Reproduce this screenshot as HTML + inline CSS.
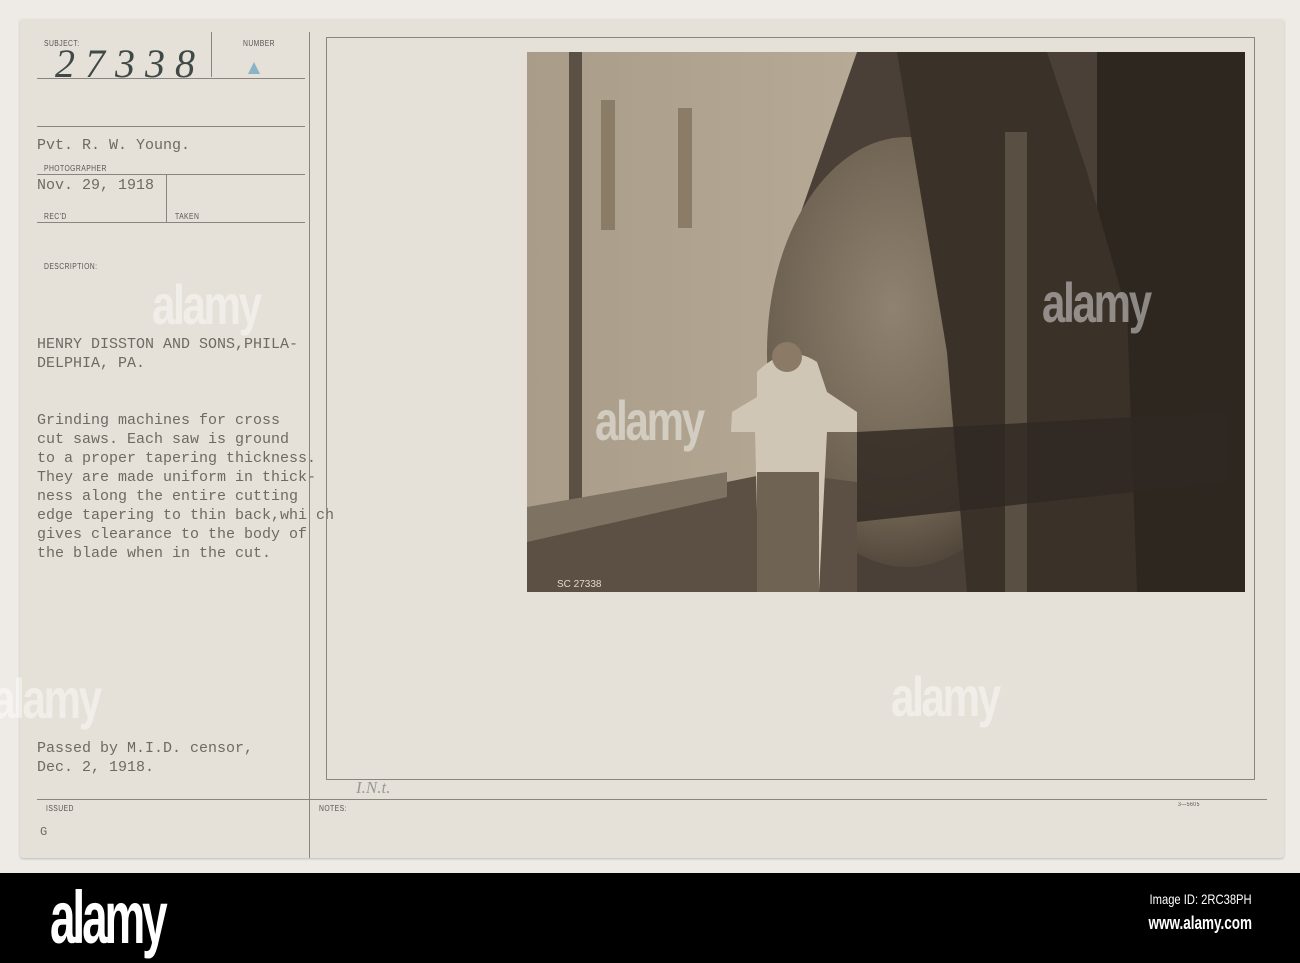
<!DOCTYPE html>
<html><head><meta charset="utf-8"><style>
*{margin:0;padding:0;box-sizing:border-box}
body{width:1300px;height:963px;background:#eeebe6;position:relative;overflow:hidden;font-family:"Liberation Sans",sans-serif}
#card{position:absolute;left:20px;top:19px;width:1264px;height:839px;background:#e6e1d8;border-radius:3px;box-shadow:0 1px 2px #bbb}
.t{position:absolute;font-family:"Liberation Mono",monospace;font-size:15px;color:#6e6962;line-height:19px;white-space:pre;letter-spacing:0}
.l{position:absolute;font-size:8px;color:#555;letter-spacing:.5px;font-family:"Liberation Sans",sans-serif;transform:scaleX(.85);transform-origin:left}
.h{position:absolute;height:1px;background:#8a857e}
.v{position:absolute;width:1px;background:#8a857e}
.wm{position:absolute;color:rgba(255,255,255,.45);font-family:"Liberation Sans",sans-serif;font-weight:bold;font-size:56px;letter-spacing:-3px;transform:scaleX(.75);transform-origin:left}
#bar{position:absolute;left:0;top:873px;width:1300px;height:90px;background:#000}
</style></head><body>
<div id="card"></div>
<div class="l" style="left:44px;top:39px">SUBJECT:</div>
<div class="l" style="left:243px;top:39px">NUMBER</div>
<div style="position:absolute;left:55px;top:40px;font-family:'Liberation Serif',serif;font-style:italic;font-size:40px;color:#3f4a48;letter-spacing:10px">27338</div>
<div style="position:absolute;left:248px;top:62px;width:0;height:0;border-left:6px solid transparent;border-right:6px solid transparent;border-bottom:12px solid #8ab3c6"></div>
<div class="v" style="left:211px;top:32px;height:45px"></div>
<div class="h" style="left:37px;top:78px;width:268px"></div>
<div class="h" style="left:37px;top:126px;width:268px"></div>
<div class="t" style="left:37px;top:136px">Pvt. R. W. Young.</div>
<div class="l" style="left:44px;top:164px">PHOTOGRAPHER</div>
<div class="h" style="left:37px;top:174px;width:268px"></div>
<div class="t" style="left:37px;top:176px">Nov. 29, 1918</div>
<div class="v" style="left:166px;top:175px;height:47px"></div>
<div class="l" style="left:44px;top:212px">REC'D</div>
<div class="l" style="left:175px;top:212px">TAKEN</div>
<div class="h" style="left:37px;top:222px;width:268px"></div>
<div class="l" style="left:44px;top:262px">DESCRIPTION:</div>
<div class="t" style="left:37px;top:335px">HENRY DISSTON AND SONS,PHILA-
DELPHIA, PA.</div>
<div class="t" style="left:37px;top:411px">Grinding machines for cross
cut saws. Each saw is ground
to a proper tapering thickness.
They are made uniform in thick-
ness along the entire cutting
edge tapering to thin back,whi ch
gives clearance to the body of
the blade when in the cut.</div>
<div class="t" style="left:37px;top:739px">Passed by M.I.D. censor,
Dec. 2, 1918.</div>
<div class="v" style="left:309px;top:32px;height:826px"></div>
<div style="position:absolute;left:326px;top:37px;width:929px;height:743px;border:1px solid #8a857e"></div>
<div class="h" style="left:37px;top:799px;width:1230px"></div>
<div class="l" style="left:46px;top:804px">ISSUED</div>
<div class="l" style="left:319px;top:804px">NOTES:</div>
<div class="l" style="left:1178px;top:802px;font-size:6px">3—5605</div>
<div class="t" style="left:40px;top:823px;font-size:12px">G</div>
<div style="position:absolute;left:356px;top:778px;font-family:'Liberation Serif',serif;font-style:italic;font-size:17px;color:#999">I.N.t.</div>
<svg style="position:absolute;left:527px;top:52px" width="718" height="540" viewBox="0 0 718 540">
<defs>
<linearGradient id="wall" x1="0" x2="1"><stop offset="0" stop-color="#a99d89"/><stop offset=".5" stop-color="#b7ab97"/><stop offset="1" stop-color="#8a7d6a"/></linearGradient>
<radialGradient id="wh" cx=".45" cy=".4" r=".7"><stop offset="0" stop-color="#8f8270"/><stop offset=".7" stop-color="#6a5e4e"/><stop offset="1" stop-color="#3e352b"/></radialGradient>
</defs>
<rect width="718" height="540" fill="url(#wall)"/>
<rect x="42" y="0" width="13" height="480" fill="#5a5044"/>
<rect x="74" y="48" width="14" height="130" fill="#8a7c66"/>
<rect x="151" y="56" width="14" height="120" fill="#8a7c66"/>
<path d="M330 0 L718 0 L718 540 L240 540 L260 200Z" fill="#4a4037"/>
<rect x="570" y="0" width="148" height="540" fill="#2e2720"/>
<ellipse cx="380" cy="300" rx="140" ry="215" fill="url(#wh)"/>
<path d="M370 0 L520 0 L560 120 L600 260 L610 540 L440 540 L420 300 L380 60Z" fill="#3a3129"/>
<rect x="478" y="80" width="22" height="460" fill="#5a4f43"/>
<path d="M0 470 L250 420 L330 430 L330 540 L0 540Z" fill="#5b5043"/>
<path d="M0 455 L200 420 L200 445 L0 490Z" fill="#7e7262"/>
<path d="M230 320 Q260 290 290 310 L300 340 L330 360 L330 380 L300 380 L292 540 L232 540 L228 380 L204 380 L205 360 L230 345Z" fill="#d0c6b6"/>
<rect x="230" y="420" width="62" height="120" fill="#6f6454"/>
<circle cx="260" cy="305" r="15" fill="#8a7a66"/>
<path d="M330 380 L700 360 L700 430 L330 470Z" fill="#2f2822" opacity=".8"/>
<text x="30" y="535" font-size="10" fill="#e0d8cc" font-family="Liberation Sans">SC 27338</text>
</svg>
<div class="wm" style="left:152px;top:272px">alamy</div>
<div class="wm" style="left:-8px;top:666px">alamy</div>
<div class="wm" style="left:595px;top:388px">alamy</div>
<div class="wm" style="left:1042px;top:270px">alamy</div>
<div class="wm" style="left:891px;top:664px">alamy</div>
<div id="bar">
<div style="position:absolute;left:50px;top:2px;color:#fff;font-weight:bold;font-size:74px;letter-spacing:-5px;transform:scaleX(.62);transform-origin:left;font-family:'Liberation Sans',sans-serif">alamy</div>
<div style="position:absolute;right:48px;top:18px;color:#fff;font-size:14px;transform:scaleX(.8);transform-origin:right">Image ID: 2RC38PH</div>
<div style="position:absolute;right:48px;top:40px;color:#fff;font-size:18px;font-weight:bold;transform:scaleX(.75);transform-origin:right">www.alamy.com</div>
</div>
</body></html>
